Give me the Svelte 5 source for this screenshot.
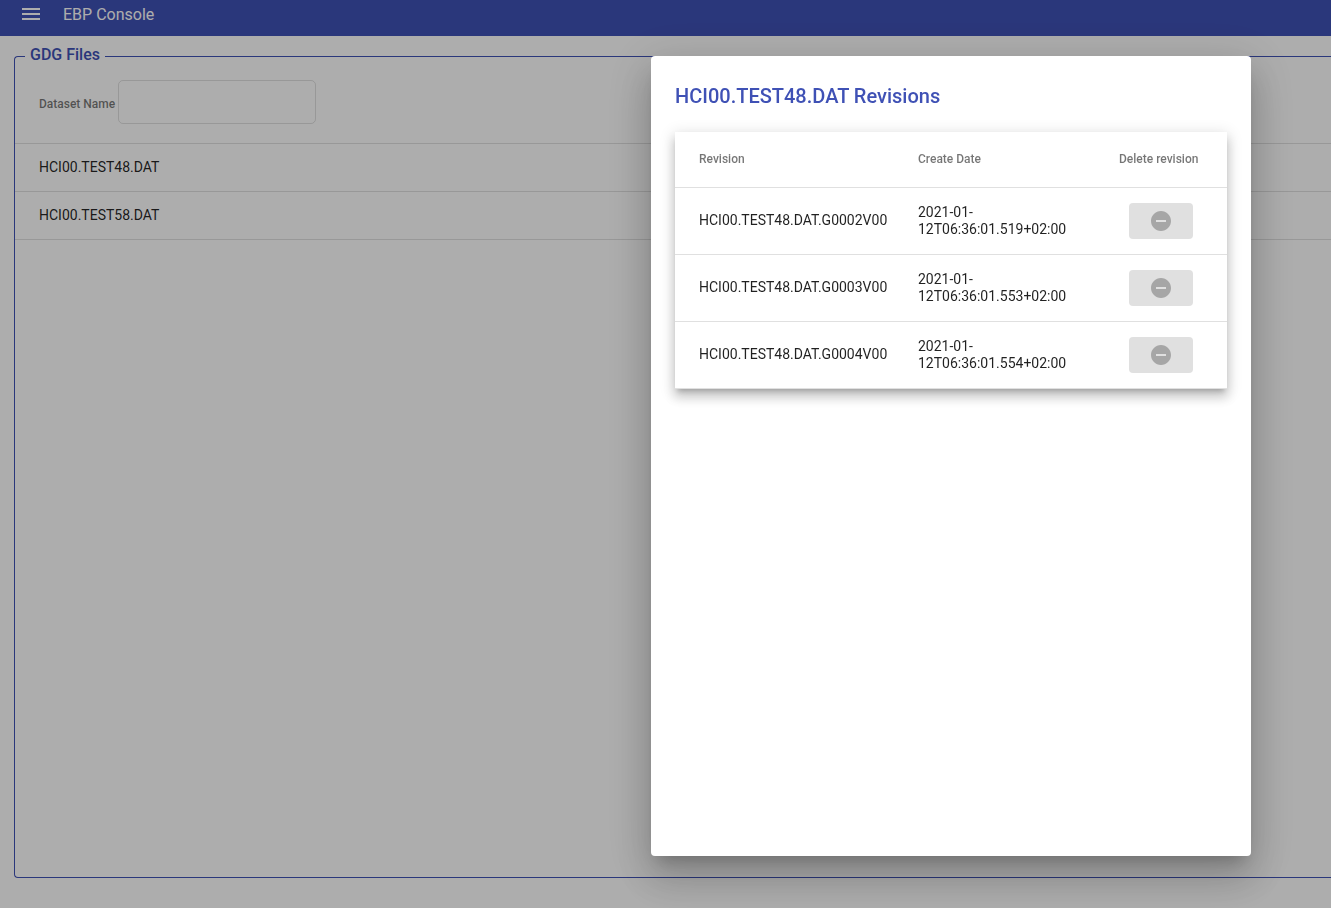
<script lang="ts">
  let datasetName = "";

  const datasets = ["HCI00.TEST48.DAT", "HCI00.TEST58.DAT"];
  const selected = datasets[0];

  const revisions = [
    { name: "HCI00.TEST48.DAT.G0002V00", created: "2021-01-12T06:36:01.519+02:00" },
    { name: "HCI00.TEST48.DAT.G0003V00", created: "2021-01-12T06:36:01.553+02:00" },
    { name: "HCI00.TEST48.DAT.G0004V00", created: "2021-01-12T06:36:01.554+02:00" },
  ];
</script>

<div class="shell">
  <header class="toolbar">
    <button class="menu-btn" aria-label="Menu">
      <svg width="24" height="24" viewBox="0 0 24 24" fill="currentColor">
        <path d="M3 18h18v-2H3v2zm0-5h18v-2H3v2zm0-7v2h18V6H3z"/>
      </svg>
    </button>
    <span class="app-title">EBP Console</span>
  </header>

  <main class="content">
    <fieldset class="files">
      <legend>GDG Files</legend>
      <table class="files-table">
        <thead>
          <tr>
            <th>
              <div class="filter">
                <label for="dataset-name">Dataset Name</label>
                <input id="dataset-name" type="text" bind:value={datasetName} />
              </div>
            </th>
          </tr>
        </thead>
        <tbody>
          {#each datasets as dataset}
            <tr><td class="name">{dataset}</td></tr>
          {/each}
        </tbody>
      </table>
    </fieldset>
  </main>
</div>

<div class="backdrop">
  <div class="dialog" role="dialog" aria-modal="true" aria-labelledby="dialog-title">
    <h2 id="dialog-title">{selected} Revisions</h2>
    <table class="revisions">
      <colgroup>
        <col class="col-name" />
        <col class="col-date" />
        <col />
      </colgroup>
      <thead>
        <tr>
          <th>Revision</th>
          <th>Create Date</th>
          <th>Delete revision</th>
        </tr>
      </thead>
      <tbody>
        {#each revisions as revision}
          <tr>
            <td class="name">{revision.name}</td>
            <td class="date">{revision.created}</td>
            <td class="action">
              <button class="delete-btn" disabled aria-label="Delete {revision.name}">
                <svg width="24" height="24" viewBox="0 0 24 24" fill="currentColor">
                  <path d="M12 2C6.48 2 2 6.48 2 12s4.48 10 10 10 10-4.48 10-10S17.52 2 12 2zm5 11H7v-2h10v2z"/>
                </svg>
              </button>
            </td>
          </tr>
        {/each}
      </tbody>
    </table>
  </div>
</div>

<style>
  :global(body) {
    margin: 0;
    background: #fff;
    font-family: Roboto, "Liberation Sans", sans-serif;
    font-size: 14px;
    color: rgba(0, 0, 0, 0.87);
  }

  .shell {
    display: flex;
    flex-direction: column;
    min-height: 100vh;
  }

  .toolbar {
    display: flex;
    align-items: center;
    gap: 20px;
    padding: 2px 19px 10px;
    background: #3f51b5;
    color: #fff;
  }

  .menu-btn {
    display: flex;
    padding: 0;
    border: none;
    background: none;
    color: inherit;
    cursor: pointer;
  }

  .app-title {
    padding-top: 2px;
    font-size: 16px;
    line-height: 22px;
  }

  .content {
    display: flex;
    flex: 1;
    padding: 8px 0 30px 14px;
  }

  .files {
    flex: 1;
    min-width: 0;
    margin: 0;
    padding: 0;
    border: 1px solid #3f51b5;
    border-right: none;
    border-radius: 4px 0 0 4px;
  }

  .files legend {
    margin-left: 10px;
    padding: 1px 5px 3px;
    font-size: 16px;
    font-weight: 500;
    line-height: 20px;
    color: #3f51b5;
  }

  table {
    width: 100%;
    border-collapse: separate;
    border-spacing: 0;
  }

  th,
  td {
    padding: 0;
    border-bottom: 1px solid rgba(0, 0, 0, 0.12);
    text-align: left;
  }

  th:first-child,
  td:first-child {
    padding-left: 24px;
  }

  th {
    font-size: 12px;
    font-weight: 500;
    color: rgba(0, 0, 0, 0.54);
  }

  td {
    height: 47px;
    font-size: 14px;
  }

  .files-table .name {
    height: 45px;
    padding-bottom: 2px;
  }

  .filter {
    display: flex;
    align-items: center;
    gap: 3px;
    padding: 12px 0 19px;
  }

  .filter label {
    padding-top: 4px;
  }

  .filter input {
    box-sizing: border-box;
    width: 198px;
    height: 44px;
    padding: 0 12px;
    border: 1px solid rgba(0, 0, 0, 0.12);
    border-radius: 5px;
    background: transparent;
    font: inherit;
    font-size: 14px;
    outline: none;
  }

  .backdrop {
    position: fixed;
    inset: 0;
    display: flex;
    justify-content: flex-end;
    padding: 56px 80px 52px;
    background: rgba(0, 0, 0, 0.32);
  }

  .dialog {
    box-sizing: border-box;
    width: 600px;
    padding: 24px;
    overflow: auto;
    border-radius: 4px;
    background: #fff;
    box-shadow:
      0 11px 15px -7px rgba(0, 0, 0, 0.2),
      0 24px 38px 3px rgba(0, 0, 0, 0.14),
      0 9px 46px 8px rgba(0, 0, 0, 0.12);
  }

  h2 {
    margin: 0 0 20px;
    font-size: 20px;
    font-weight: 500;
    line-height: 32px;
    color: #3f51b5;
  }

  .revisions {
    table-layout: fixed;
    background: #fff;
    box-shadow:
      0 5px 5px -3px rgba(0, 0, 0, 0.2),
      0 8px 10px 1px rgba(0, 0, 0, 0.14),
      0 3px 14px 2px rgba(0, 0, 0, 0.12);
  }

  .col-name {
    width: 243px;
  }

  .col-date {
    width: 201px;
  }

  .revisions th {
    height: 53px;
    padding-bottom: 2px;
  }

  .revisions td {
    height: 66px;
  }

  .revisions .name {
    height: 64px;
    padding-bottom: 2px;
  }

  .revisions .date {
    padding-right: 24px;
    line-height: 17px;
  }

  .revisions .action {
    padding-right: 24px;
    text-align: center;
  }

  .delete-btn {
    display: inline-flex;
    align-items: center;
    justify-content: center;
    width: 64px;
    height: 36px;
    padding: 0;
    border: none;
    border-radius: 4px;
    background: #e0e0e0;
    color: rgba(0, 0, 0, 0.26);
    vertical-align: middle;
  }
</style>
